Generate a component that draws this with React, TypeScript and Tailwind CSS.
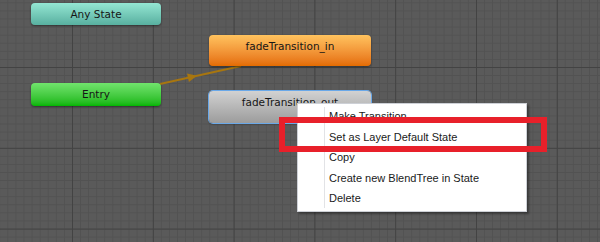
import React from "react"

type NodeProps = {
  label: string
  className: string
}

function StateNode({ label, className }: NodeProps) {
  return (
    <div
      className={
        "absolute rounded-[4px] shadow-[0_1px_2px_rgba(0,0,0,0.45)] text-[10.5px] leading-[22px] text-center text-[#161616] " +
        className
      }
      style={{ fontFamily: '"DejaVu Sans", Verdana, sans-serif' }}
    >
      {label}
    </div>
  )
}

const menuItems = [
  "Make Transition",
  "Set as Layer Default State",
  "Copy",
  "Create new BlendTree in State",
  "Delete",
]

export default function App() {
  return (
    <div className="relative w-[600px] h-[242px] overflow-hidden bg-[#5a5a5a] [background-image:linear-gradient(to_right,#434343_1px,transparent_1px),linear-gradient(to_bottom,#434343_1px,transparent_1px),linear-gradient(to_right,#525252_1px,transparent_1px),linear-gradient(to_bottom,#525252_1px,transparent_1px)] [background-size:80.8px_80.8px,80.8px_80.8px,8.08px_8.08px,8.08px_8.08px] [background-position:72px_67px,72px_67px,72px_67px,72px_67px]">
      {/* transition arrow */}
      <svg className="absolute left-0 top-0" width="600" height="242">
        <line x1="160" y1="84" x2="241" y2="66" stroke="#a8760f" strokeWidth="2" />
        <polygon points="197,75.8 188.9,82 187,73.6" fill="#a8760f" />
      </svg>

      {/* state nodes */}
      <StateNode
        label="Any State"
        className="left-[31px] top-[3px] w-[130px] h-[22px] bg-linear-to-b from-[#94e6d3] to-[#58b0a0]"
      />
      <StateNode
        label="fadeTransition_in"
        className="left-[209px] top-[35px] w-[162px] h-[31px] bg-linear-to-b from-[#ffc35e] to-[#e46c00]"
      />
      <StateNode
        label="Entry"
        className="left-[31px] top-[83px] w-[130px] h-[23px] bg-linear-to-b from-[#70e46c] to-[#00b600]"
      />
      <StateNode
        label="fadeTransition_out"
        className="left-[209px] top-[91px] w-[162px] h-[32px] bg-linear-to-b from-[#d2d2d2] to-[#9c9c9c] ring-1 ring-[#6aa8e8]"
      />

      {/* context menu */}
      <div
        className="absolute left-[297px] top-[103px] w-[230px] bg-white border border-[#cdd0d6] shadow-[2px_2px_2px_rgba(0,0,0,0.35)] py-[2px] text-[11px] text-[#1a1a1a]"
        style={{ fontFamily: '"Liberation Sans", Arial, sans-serif' }}
      >
        <div className="absolute left-[26px] top-[3px] bottom-[3px] w-px bg-[#e2e3e6]" />
        {menuItems.map((item) => (
          <div key={item} className="h-[20.6px] flex items-center pl-[31px]">
            {item}
          </div>
        ))}
      </div>

      {/* highlight */}
      <div className="absolute left-[279px] top-[117px] w-[268px] h-[35px] border-[6px] border-[#e8202a]" />
    </div>
  )
}
